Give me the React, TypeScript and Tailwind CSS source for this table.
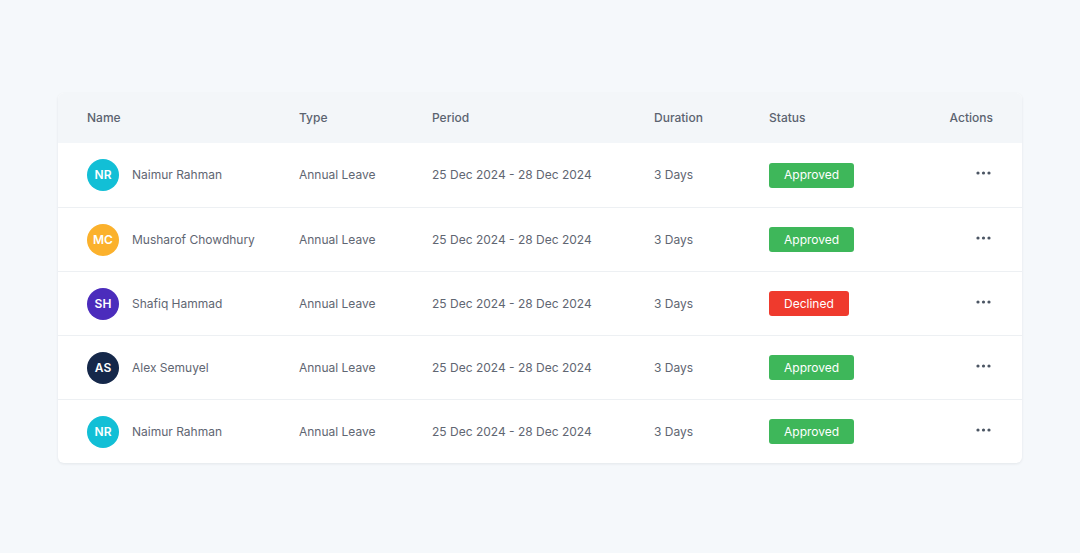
import React from 'react'

type Row = {
  initials: string
  name: string
  color: string
  status: 'Approved' | 'Declined'
}

const rows: Row[] = [
  { initials: 'NR', name: 'Naimur Rahman', color: 'bg-[#12bfd6]', status: 'Approved' },
  { initials: 'MC', name: 'Musharof Chowdhury', color: 'bg-[#fbb12c]', status: 'Approved' },
  { initials: 'SH', name: 'Shafiq Hammad', color: 'bg-[#4b2cbc]', status: 'Declined' },
  { initials: 'AS', name: 'Alex Semuyel', color: 'bg-[#15284a]', status: 'Approved' },
  { initials: 'NR', name: 'Naimur Rahman', color: 'bg-[#12bfd6]', status: 'Approved' },
]

const cols = 'grid grid-cols-[212px_133px_222px_115px_1fr_94px] items-center px-[29px]'

function Dots() {
  return (
    <svg width="15" height="4" viewBox="0 0 15 4" className="block">
      <circle cx="2" cy="2" r="1.6" fill="#4b5563" />
      <circle cx="7.5" cy="2" r="1.6" fill="#4b5563" />
      <circle cx="13" cy="2" r="1.6" fill="#4b5563" />
    </svg>
  )
}

export default function App() {
  return (
    <div
      className="min-h-screen bg-[#f5f8fb] flex items-center justify-center pt-[3px]"
      style={{ fontFamily: 'Inter, "Noto Sans", sans-serif' }}
    >
      <div className="w-[964px] bg-white rounded-md shadow-[0_1px_3px_rgba(16,24,40,0.08)] overflow-hidden">
        <div className={`${cols} h-[50px] bg-[#f3f6f9] text-[12px] font-medium text-[#5b6370]`}>
          <div>Name</div>
          <div>Type</div>
          <div>Period</div>
          <div>Duration</div>
          <div>Status</div>
          <div className="text-right">Actions</div>
        </div>

        {rows.map((row, i) => (
          <div
            key={i}
            className={`${cols} h-[64px] text-[12px] text-[#5f6672] ${i > 0 ? 'border-t border-[#edf0f3]' : ''}`}
          >
            <div className="flex items-center gap-[13px]">
              <div
                className={`w-8 h-8 rounded-full ${row.color} flex items-center justify-center text-white text-[12px] font-semibold`}
              >
                {row.initials}
              </div>
              <span>{row.name}</span>
            </div>
            <div>Annual Leave</div>
            <div>25 Dec 2024 - 28 Dec 2024</div>
            <div>3 Days</div>
            <div>
              {row.status === 'Approved' ? (
                <span className="inline-flex items-center h-[25px] px-[15px] rounded-[3px] bg-[#3eb75a] text-white text-[12px]">
                  Approved
                </span>
              ) : (
                <span className="inline-flex items-center h-[25px] px-[15px] rounded-[3px] bg-[#ef3a2d] text-white text-[12px]">
                  Declined
                </span>
              )}
            </div>
            <div className="flex justify-end pr-[2px] -mt-[4px]">
              <Dots />
            </div>
          </div>
        ))}
      </div>
    </div>
  )
}
